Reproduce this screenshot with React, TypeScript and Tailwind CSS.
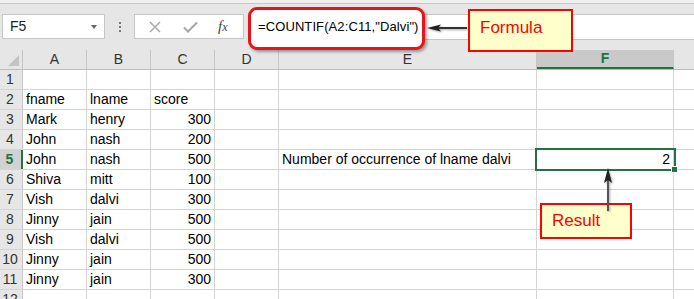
const rows: { n: number; a?: string; b?: string; c?: string; cLeft?: boolean; e?: string; f?: string }[] = [
  { n: 1 },
  { n: 2, a: "fname", b: "lname", c: "score", cLeft: true },
  { n: 3, a: "Mark", b: "henry", c: "300" },
  { n: 4, a: "John", b: "nash", c: "200" },
  { n: 5, a: "John", b: "nash", c: "500", e: "Number of occurrence of lname dalvi", f: "2" },
  { n: 6, a: "Shiva", b: "mitt", c: "100" },
  { n: 7, a: "Vish", b: "dalvi", c: "300" },
  { n: 8, a: "Jinny", b: "jain", c: "500" },
  { n: 9, a: "Vish", b: "dalvi", c: "500" },
  { n: 10, a: "Jinny", b: "jain", c: "500" },
  { n: 11, a: "Jinny", b: "jain", c: "300" },
  { n: 12 },
]

const cell = "h-full border-r border-[#d4d4d4] px-[3px] truncate"

export default function App() {
  return (
    <div className="relative h-[299px] w-[694px] overflow-hidden bg-white font-['Liberation_Sans',Arial,sans-serif] text-[14px] text-black">
      {/* Formula bar */}
      <div className="h-[50px] bg-[#e6e6e6]">
        <div className="h-[4px] border-b border-[#c8c8c8] bg-[#f0f0f0]" />
        <div className="mt-[10px] flex items-start">
          <div className="ml-[2px] flex h-[25px] w-[103px] items-center justify-between border border-[#c6c6c6] bg-white pl-[7px] pr-[7px]">
            <span className="text-[14px] text-[#222]">F5</span>
            <span className="h-0 w-0 border-x-[3.5px] border-t-[4px] border-x-transparent border-t-[#666]" />
          </div>
          <div className="flex h-[25px] w-[29px] flex-col items-center justify-center gap-[2px]">
            <span className="h-[2px] w-[2px] bg-[#777]" />
            <span className="h-[2px] w-[2px] bg-[#777]" />
            <span className="h-[2px] w-[2px] bg-[#777]" />
          </div>
          <div className="flex h-[25px] w-[110px] items-center border border-[#c6c6c6] bg-white">
            <svg width="12" height="12" viewBox="0 0 12 12" className="ml-[14px]">
              <path d="M1 1L11 11M11 1L1 11" stroke="#a6a6a6" strokeWidth="1.4" />
            </svg>
            <svg width="15" height="12" viewBox="0 0 15 12" className="ml-[22px]">
              <path d="M1 6.5L5 10.5L14 1.5" stroke="#a6a6a6" strokeWidth="2" fill="none" />
            </svg>
            <span className="ml-[20px] font-['Liberation_Serif',serif] text-[15px] italic text-[#444]">
              f<span className="text-[12px]">x</span>
            </span>
          </div>
          <div className="ml-[4px] h-[26px] flex-1 border-y border-[#c6c6c6] bg-white" />
        </div>
      </div>

      {/* Grid */}
      <div className="flex h-[20px] border-b border-[#bdbdbd] bg-[#e6e6e6] text-[#333]">
        <div className="relative w-[23px] border-r border-[#c6c6c6]">
          <span className="absolute bottom-[3px] right-[3px] h-0 w-0 border-b-[11px] border-l-[11px] border-b-[#c4c4c4] border-l-transparent" />
        </div>
        {["A", "B", "C", "D"].map((c) => (
          <div key={c} className="flex w-[64px] items-center justify-center border-r border-[#c6c6c6]">
            {c}
          </div>
        ))}
        <div className="flex w-[258px] items-center justify-center border-r border-[#c6c6c6]">E</div>
        <div className="flex w-[137px] items-center justify-center border-b-2 border-r border-b-[#217346] border-r-[#c6c6c6] bg-[#c9c9c9] font-bold text-[#217346]">
          F
        </div>
        <div className="flex-1" />
      </div>

      {rows.map((r) => {
        const sel = r.n === 5
        return (
          <div key={r.n} className="flex h-[20px] border-b border-[#d4d4d4] leading-[19px]">
            <div
              className={
                sel
                  ? "w-[23px] border-r-2 border-[#217346] bg-[#d2d2d2] pr-[2px] text-center font-bold text-[#217346]"
                  : "w-[23px] border-r border-[#c6c6c6] bg-[#e6e6e6] pr-[2px] text-center text-[#333]"
              }
            >
              {r.n}
            </div>
            <div className={`${cell} w-[64px]`}>{r.a}</div>
            <div className={`${cell} w-[64px]`}>{r.b}</div>
            <div className={`${cell} w-[64px] ${r.cLeft ? "text-left" : "text-right"}`}>{r.c}</div>
            <div className={`${cell} w-[64px]`}></div>
            <div className={`${cell} w-[258px] overflow-visible`}>{r.e}</div>
            <div className={`${cell} w-[137px] text-right`}>{r.f}</div>
            <div className="flex-1" />
          </div>
        )
      })}

      {/* Selected cell F5 */}
      <div className="absolute left-[535px] top-[148px] h-[23px] w-[141px] border-2 border-[#217346]" />
      <div className="absolute left-[671px] top-[166px] h-[7px] w-[7px] border border-white bg-[#217346]" />

      {/* Formula annotation */}
      <div className="absolute left-[248px] top-[7px] flex h-[43px] w-[177px] items-center rounded-[9px] border-[3px] border-[#e8141b] bg-white pb-[3px] pl-[7px] text-[13px] tracking-[0.1px] text-black shadow-[2px_2px_3px_rgba(0,0,0,0.35)]">
        =COUNTIF(A2:C11,"Dalvi")
      </div>
      <div className="absolute left-[468px] top-[9px] flex h-[43px] w-[105px] items-center border-2 border-[#ff0000] bg-[#ffffcc] pb-[6px] pl-[10px] text-[17px] text-[#ff0000]">
        Formula
      </div>
      <div className="absolute left-[540px] top-[203px] flex h-[36px] w-[92px] items-center border-2 border-[#ff0000] bg-[#ffffcc] pl-[10px] text-[17px] text-[#ff0000]">
        Result
      </div>

      {/* Arrows */}
      <svg className="pointer-events-none absolute left-0 top-0" width="694" height="299">
        <defs>
          <filter id="sh" x="-50%" y="-50%" width="200%" height="200%">
            <feDropShadow dx="1" dy="1" stdDeviation="1" floodColor="#000" floodOpacity="0.35" />
          </filter>
        </defs>
        <g filter="url(#sh)">
          <path d="M467 28H436" stroke="#333" strokeWidth="2" />
          <path d="M427 28L441 24.5L438 28L441 31.5Z" fill="#222" />
          <path d="M608 211V178" stroke="#555" strokeWidth="2" />
          <path d="M608 168L604 183L608 180L612 183Z" fill="#222" />
        </g>
      </svg>
    </div>
  )
}
